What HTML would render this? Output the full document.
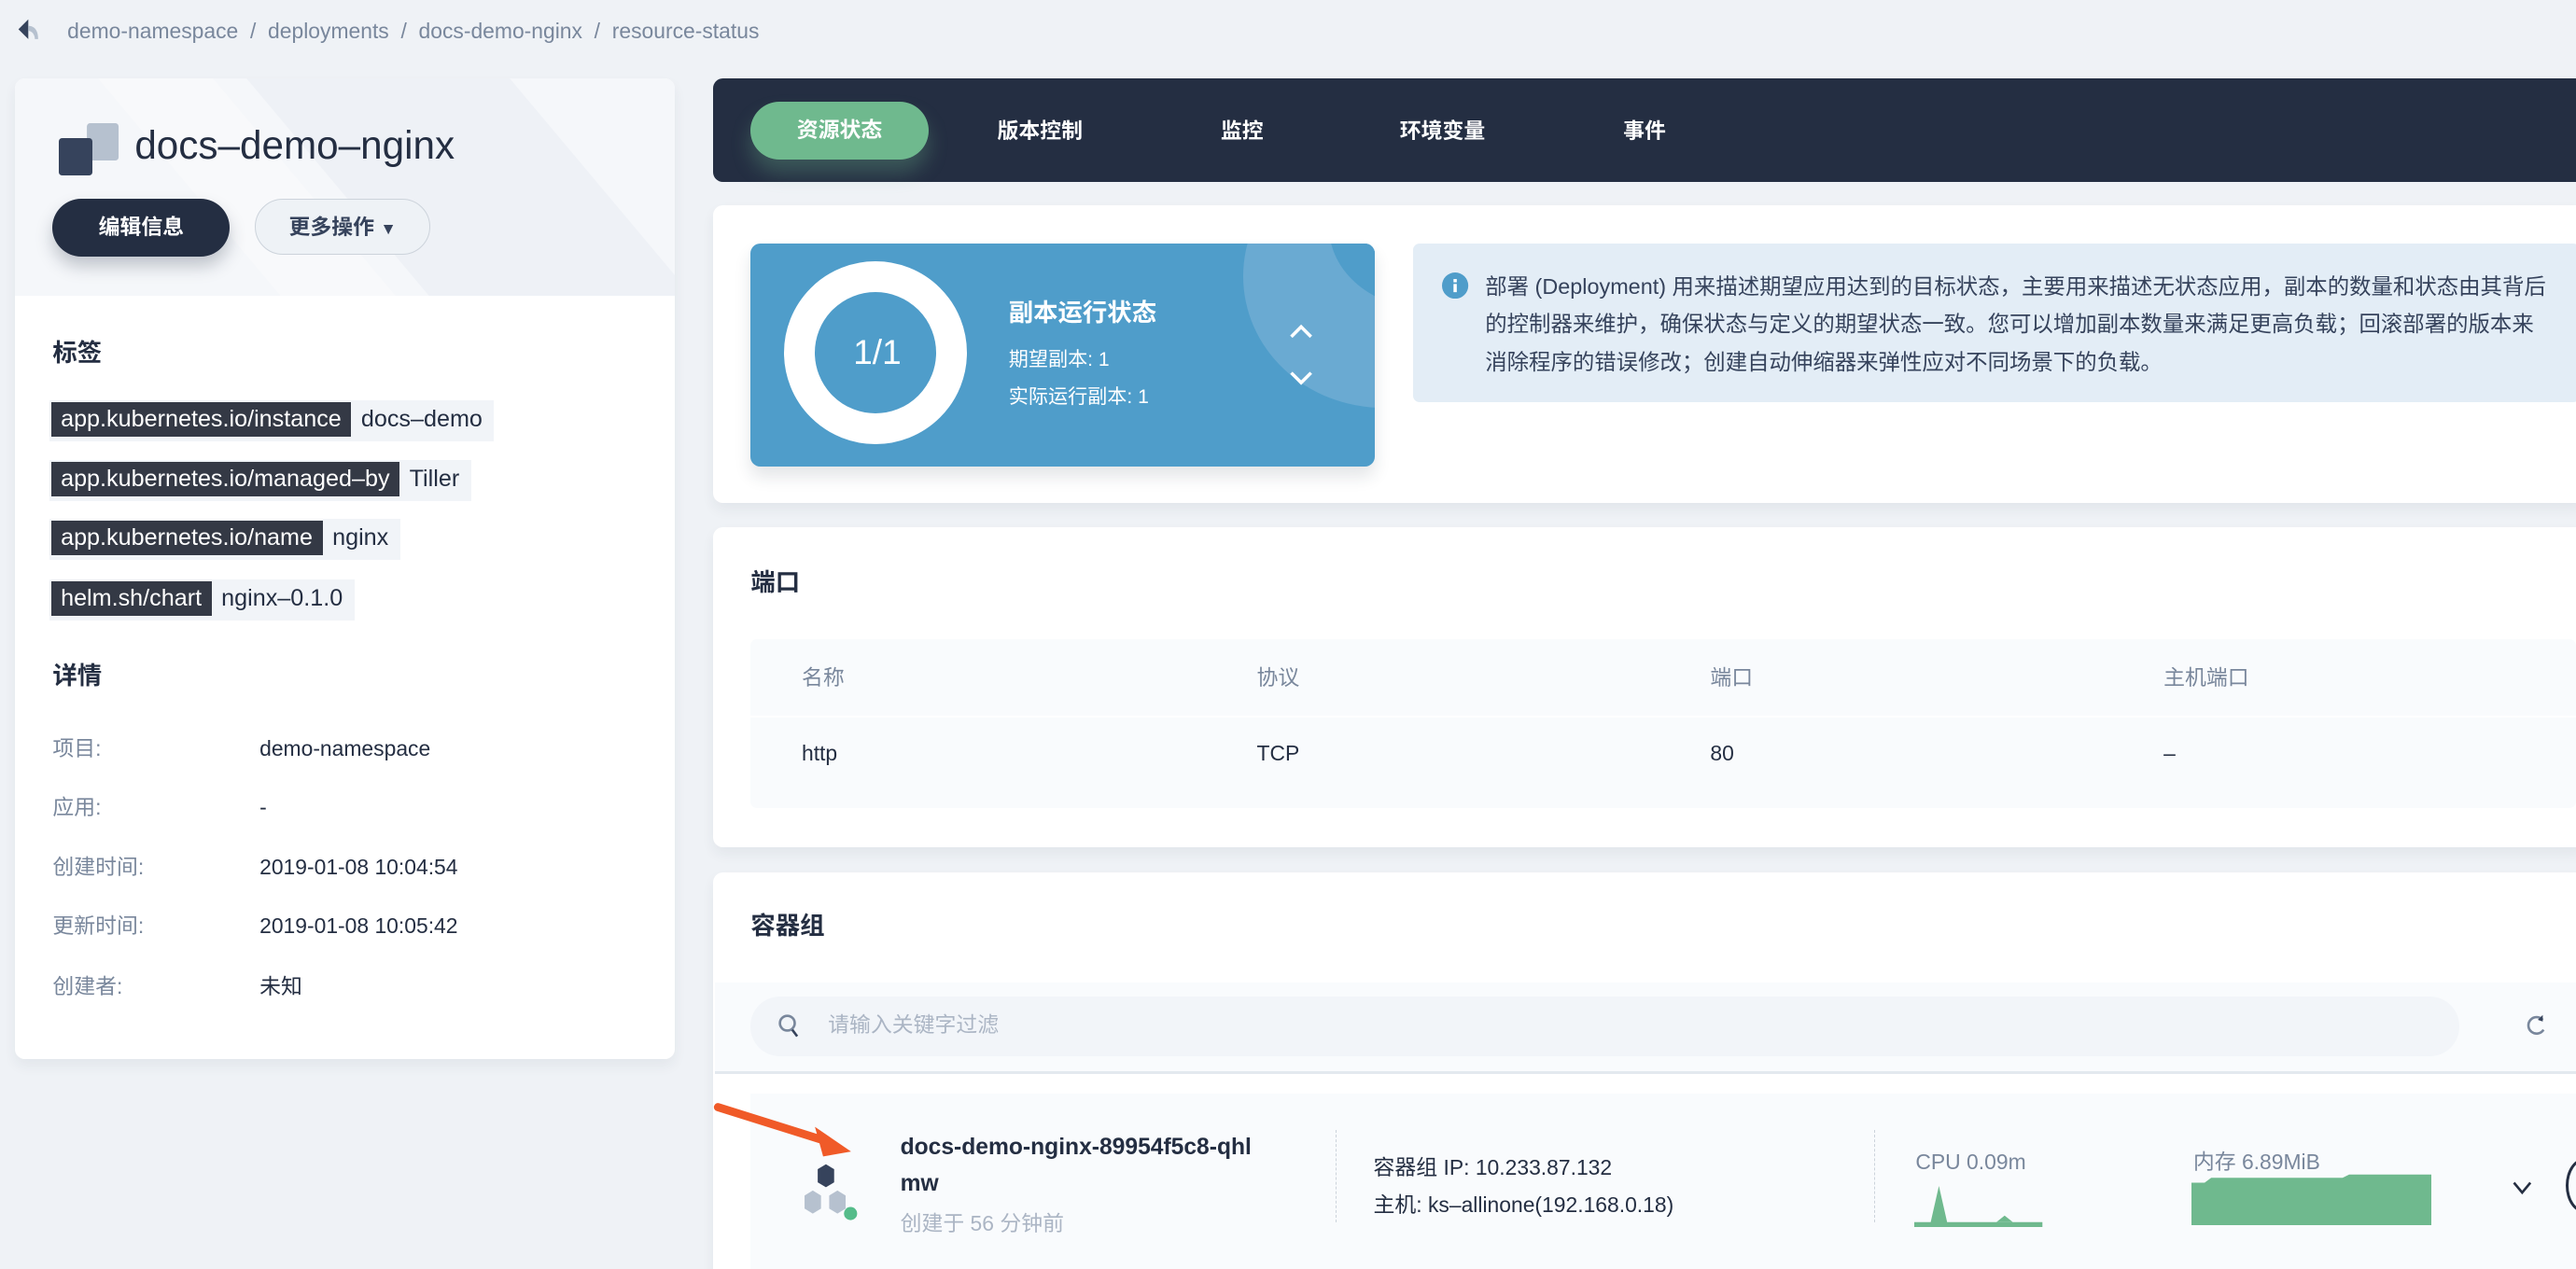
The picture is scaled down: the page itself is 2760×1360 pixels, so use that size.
<!DOCTYPE html>
<html><head><meta charset="utf-8"><style>
html,body{margin:0;padding:0;width:2760px;height:1360px;overflow:hidden;background:#eff2f6}
#w{zoom:1.7602;width:1568px;height:773px;position:relative;font-family:"Liberation Sans","Noto Sans CJK SC",sans-serif;color:#242e42;font-size:13px;line-height:18px}
.a{position:absolute;white-space:nowrap}
.card{position:absolute;background:#fff;border-radius:6px;box-shadow:0 4px 8px rgba(36,46,66,.06)}
.k{background:#343945;color:#fff;padding:0 6px;display:inline-block;height:21px;line-height:21px}
.v{padding:0 6px;display:inline-block;height:21px;line-height:21px}
.tag{position:absolute;left:30px;background:#f1f4f8;height:23px;padding:1px;font-size:14.3px}
.lab{color:#79879c}
.h{font-weight:bold;font-size:15px}
</style></head><body><div id="w">
<svg class="a" style="left:10px;top:11px" width="16" height="14" viewBox="0 0 16 14"><path d="M7 1 L1 7 L7 13 Z" fill="#36435c"/><path d="M7 5 C11 5 13 8 13 13 L11 13 C11 10 9 8 7 8Z" fill="#b6c1cf"/></svg>
<div class="a" style="left:41px;top:10px;color:#79879c;font-size:13px">demo-namespace &nbsp;/&nbsp; deployments &nbsp;/&nbsp; docs-demo-nginx &nbsp;/&nbsp; resource-status</div>

<div class="card" style="left:9px;top:48px;width:402px;height:597px;overflow:hidden">
 <div class="a" style="left:0;top:0;width:402px;height:132px;background:#f5f7fa;overflow:hidden">
  <div class="a" style="left:200px;top:-60px;width:160px;height:260px;background:#eef1f6;transform:skewX(40deg)"></div>
  <div class="a" style="left:110px;top:-60px;width:70px;height:260px;background:#f8f9fb;transform:skewX(40deg)"></div>
 </div>
 <div class="a" style="left:36px;top:27px;width:19px;height:23px;background:#b6c1cf;border-radius:2px;left:36px;transform:translateX(8px)"></div>
 <div class="a" style="left:27px;top:36px;width:20px;height:23px;background:#36435c;border-radius:2px"></div>
 <div class="a" style="left:73px;top:26px;font-size:24px;line-height:30px">docs–demo–nginx</div>
 <div class="a" style="left:23px;top:73px;width:108px;height:35px;border-radius:18px;background:#242e42;color:#fff;text-align:center;line-height:35px;font-weight:bold;box-shadow:0 6px 10px rgba(36,46,66,.25)">编辑信息</div>
 <div class="a" style="left:146px;top:73px;width:106px;height:33px;border-radius:18px;background:#eef2f6;border:1px solid #ccd3db;color:#36435c;line-height:33px;text-align:center;font-weight:bold">更多操作 <span style="font-size:10px">▼</span></div>
 <div class="a h" style="left:23px;top:158px">标签</div>
 <div class="tag" style="top:196px;left:21px"><span class="k">app.kubernetes.io/instance</span><span class="v">docs–demo</span></div>
 <div class="tag" style="top:232px;left:21px"><span class="k">app.kubernetes.io/managed–by</span><span class="v">Tiller</span></div>
 <div class="tag" style="top:268px;left:21px"><span class="k">app.kubernetes.io/name</span><span class="v">nginx</span></div>
 <div class="tag" style="top:305px;left:21px"><span class="k">helm.sh/chart</span><span class="v">nginx–0.1.0</span></div>
 <div class="a h" style="left:23px;top:355px">详情</div>
 <div class="a lab" style="left:23px;top:399px">项目:</div><div class="a" style="left:149px;top:399px">demo-namespace</div>
 <div class="a lab" style="left:23px;top:435px">应用:</div><div class="a" style="left:149px;top:435px">-</div>
 <div class="a lab" style="left:23px;top:471px">创建时间:</div><div class="a" style="left:149px;top:471px">2019-01-08 10:04:54</div>
 <div class="a lab" style="left:23px;top:507px">更新时间:</div><div class="a" style="left:149px;top:507px">2019-01-08 10:05:42</div>
 <div class="a lab" style="left:23px;top:544px">创建者:</div><div class="a" style="left:149px;top:544px">未知</div>
</div>

<div class="a" style="left:434px;top:48px;width:1140px;height:63px;background:#242e42;border-radius:6px"></div>
<div class="a" style="left:457px;top:62px;width:108px;height:35px;border-radius:18px;background:#6fb98e;box-shadow:0 8px 12px rgba(111,185,142,.3);color:#fff;font-weight:bold;text-align:center;line-height:35px">资源状态</div>
<div class="a" style="left:607px;top:71px;color:#fff;font-weight:bold">版本控制</div>
<div class="a" style="left:743px;top:71px;color:#fff;font-weight:bold">监控</div>
<div class="a" style="left:852px;top:71px;color:#fff;font-weight:bold">环境变量</div>
<div class="a" style="left:988px;top:71px;color:#fff;font-weight:bold">事件</div>

<div class="card" style="left:434px;top:125px;width:1140px;height:181px"></div>
<div class="a" style="left:457px;top:148px;width:380px;height:136px;background:#4f9dca;border-radius:6px;overflow:hidden;box-shadow:0 6px 10px rgba(36,46,66,.12)">
 <div class="a" style="left:300px;top:-60px;width:170px;height:160px;border-radius:50%;background:#6aaad2"></div>
 <div class="a" style="left:352px;top:-60px;width:120px;height:100px;border-radius:50%;background:#4f9dca"></div>
 <div class="a" style="left:20px;top:11px;width:74px;height:74px;border-radius:50%;border:19px solid #fff"></div>
 <div class="a" style="left:20px;top:55px;width:114px;text-align:center;color:#fff;font-size:21px;line-height:24px">1/1</div>
 <div class="a" style="left:157px;top:34px;color:#fff;font-weight:bold;font-size:15px">副本运行状态</div>
 <div class="a" style="left:157px;top:62px;color:#fff;font-size:12px">期望副本: 1</div>
 <div class="a" style="left:157px;top:85px;color:#fff;font-size:12px">实际运行副本: 1</div>
 <svg class="a" style="left:327px;top:48px" width="16" height="40"><path d="M2 9 L8 3 L14 9 M2 31 L8 37 L14 31" stroke="#fff" stroke-width="2" fill="none"/></svg>
</div>
<div class="a" style="left:860px;top:148px;width:710px;height:97px;background:#e3edf6;border-radius:4px"></div>
<svg class="a" style="left:878px;top:166px" width="16" height="16"><circle cx="8" cy="8" r="8" fill="#4f9dca"/><rect x="7" y="7" width="2" height="5" fill="#fff"/><rect x="7" y="4" width="2" height="2" fill="#fff"/></svg>
<div class="a" style="left:904px;top:163px;color:#36435c;line-height:23px;font-size:13.3px;white-space:normal;width:646px">部署 (Deployment) 用来描述期望应用达到的目标状态，主要用来描述无状态应用，副本的数量和状态由其背后的控制器来维护，确保状态与定义的期望状态一致。您可以增加副本数量来满足更高负载；回滚部署的版本来消除程序的错误修改；创建自动伸缩器来弹性应对不同场景下的负载。</div>

<div class="card" style="left:434px;top:321px;width:1140px;height:195px"></div>
<div class="a h" style="left:457px;top:346px">端口</div>
<div class="a" style="left:457px;top:389px;width:1111px;height:103px;background:#f9fbfd;border-radius:4px"></div>
<div class="a" style="left:457px;top:436px;width:1111px;height:1px;background:#fff"></div>
<div class="a lab" style="left:488px;top:404px">名称</div><div class="a lab" style="left:765px;top:404px">协议</div><div class="a lab" style="left:1041px;top:404px">端口</div><div class="a lab" style="left:1317px;top:404px">主机端口</div>
<div class="a" style="left:488px;top:450px">http</div><div class="a" style="left:765px;top:450px">TCP</div><div class="a" style="left:1041px;top:450px">80</div><div class="a" style="left:1317px;top:450px">–</div>

<div class="card" style="left:434px;top:531px;width:1140px;height:260px"></div>
<div class="a h" style="left:457px;top:555px">容器组</div>
<div class="a" style="left:435px;top:598px;width:1133px;height:54px;background:#f9fbfd"></div>
<div class="a" style="left:457px;top:607px;width:1040px;height:36px;border-radius:18px;background:#f2f5f9"></div>
<svg class="a" style="left:473px;top:617px" width="14" height="16"><circle cx="6" cy="6" r="4.5" stroke="#79879c" stroke-width="1.5" fill="none"/><path d="M9 10 L12 14" stroke="#36435c" stroke-width="1.5"/></svg>
<div class="a" style="left:504px;top:615px;color:#abb5c4">请输入关键字过滤</div>
<svg class="a" style="left:1537px;top:617px" width="14" height="16"><path d="M11 4 A5 5 0 1 0 11.5 10" stroke="#79879c" stroke-width="1.5" fill="none"/><path d="M11 1 L11 5 L8 4Z" fill="#36435c"/></svg>
<div class="a" style="left:435px;top:652px;width:1133px;height:2px;background:#e3e9ef"></div>
<div class="a" style="left:457px;top:666px;width:1111px;height:107px;background:#f9fbfd"></div>
<svg class="a" style="left:486px;top:708px" width="40" height="40"><path d="M17 1 L22 4 L22 12 L17 15 L12 12 L12 4Z" fill="#36435c"/><path d="M9 17 L14 20 L14 28 L9 31 L4 28 L4 20Z" fill="#b6c1cf"/><path d="M24 17 L29 20 L29 28 L24 31 L19 28 L19 20Z" fill="#b6c1cf"/><circle cx="32" cy="31" r="4" fill="#55bc8a"/></svg>
<div class="a" style="left:548px;top:688px;font-size:14px;line-height:22px;font-weight:bold;color:#242e42">docs-demo-nginx-89954f5c8-qhl<br>mw</div>
<div class="a" style="left:548px;top:736px;color:#abb5c4">创建于 56 分钟前</div>
<div class="a" style="left:813px;top:688px;height:56px;border-left:1px dashed #ccd3db"></div>
<div class="a" style="left:1141px;top:688px;height:56px;border-left:1px dashed #ccd3db"></div>
<div class="a" style="left:836px;top:702px">容器组 IP: 10.233.87.132</div>
<div class="a" style="left:836px;top:725px">主机: ks–allinone(192.168.0.18)</div>
<div class="a" style="left:1166px;top:699px;color:#79879c">CPU 0.09m</div>
<div class="a" style="left:1335px;top:699px;color:#79879c">内存 6.89MiB</div>
<svg class="a" style="left:1165px;top:718px" width="80" height="29"><path d="M0 26 L10 26 L15 4 L20 26 L78 26 L78 29 L0 29Z" fill="#6fb98e"/><path d="M112 25 L117 20 L122 25Z" fill="#6fb98e"/><path d="M50 26 L55 22 L60 26Z" fill="#6fb98e"/></svg>
<svg class="a" style="left:1334px;top:714px" width="147" height="32"><path d="M0 6 L8 6 L12 3 L92 3 L96 1 L146 1 L146 32 L0 32Z" fill="#6fb98e"/></svg>
<svg class="a" style="left:1528px;top:718px" width="14" height="10"><path d="M2 2 L7 8 L12 2" stroke="#242e42" stroke-width="1.5" fill="none"/></svg>
<div class="a" style="left:1562px;top:705px;width:20px;height:30px;border-radius:50%;border:2px solid #242e42"></div>
<svg class="a" style="left:434px;top:668px" width="90" height="40"><path d="M3 6 L70 27" stroke="#f05a28" stroke-width="5" stroke-linecap="round"/><path d="M84 33 L62 18 L67 36Z" fill="#f05a28"/></svg>
</div></body></html>
